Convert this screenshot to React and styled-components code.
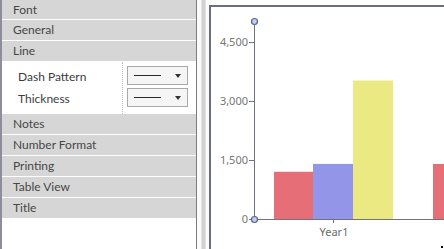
import React from "react";
import styled, { createGlobalStyle } from "styled-components";

const Global = createGlobalStyle`
  html, body { margin: 0; padding: 0; background: #fff; overflow: hidden; }
  #root { width: 444px; height: 249px; }
`;

const Page = styled.div`
  display: flex;
  width: 444px;
  height: 249px;
  overflow: hidden;
  font-family: "Lato", "Noto Sans", sans-serif;
`;

const LeftStrip = styled.div`
  width: 2px;
  flex: none;
  background: #8d8d9b;
`;

const Panel = styled.div`
  width: 194px;
  flex: none;
  display: flex;
  flex-direction: column;
  background: #fff;
  border-right: 1px solid #7c7c86;
`;

const Header = styled.div`
  height: ${(p) => (p.$first ? 19 : 20)}px;
  flex: none;
  display: flex;
  align-items: center;
  padding-left: 11px;
  background: #d6d6d6;
  border-bottom: 1px solid #fff;
  color: #474747;
  font-size: 12px;
  line-height: 1;
`;

const Content = styled.div`
  height: 52px;
  flex: none;
  display: flex;
  background: #fff;
`;

const LabelCol = styled.div`
  width: 104px;
  padding: 5px 0 0 16px;
  display: flex;
  flex-direction: column;
  gap: 3px;
`;

const ControlCol = styled.div`
  border-left: 1px dotted #b8b8b8;
  padding: 4px 0 0 4px;
  display: flex;
  flex-direction: column;
  gap: 3px;
`;

const Label = styled.div`
  height: 19px;
  display: flex;
  align-items: center;
  color: #3c3c3c;
  font-size: 12px;
`;

const Select = styled.div`
  width: 53px;
  height: 17px;
  border: 1px solid #a9a9a9;
  background: #f5f5f5;
  display: flex;
  align-items: center;
  padding-left: 6px;
  box-sizing: content-box;
`;

const LineSample = styled.div`
  width: 27px;
  height: 1px;
  background: #2a2a2a;
`;

const Arrow = styled.div`
  margin-left: 14px;
  width: 0;
  height: 0;
  border-left: 3.5px solid transparent;
  border-right: 3.5px solid transparent;
  border-top: 4px solid #333;
`;

const Gap = styled.div`
  width: ${(p) => p.$w}px;
  flex: none;
  background: #fbfbfb;
`;

const Splitter = styled.div`
  width: 3px;
  flex: none;
  background: #d2d2d2;
  border-left: 1px solid #e4e4e4;
  border-right: 1px solid #e4e4e4;
`;

const ChartArea = styled.div`
  flex: 1;
  padding-top: 5px;
  background: #fff;
`;

const ChartFrame = styled.div`
  width: 100%;
  height: 100%;
  border-left: 2px solid #6a6e80;
  border-top: 2px solid #6a6e80;
  background: #fff;
  box-sizing: border-box;
  overflow: hidden;
`;

const headersTop = ["Font", "General", "Line"];
const headersBottom = ["Notes", "Number Format", "Printing", "Table View", "Title"];

const y0 = 212;
const scale = 177 / 4500;
const yv = (v) => y0 - v * scale;

const bars = [
  { x: 63, w: 39, v: 1200, c: "#e66e77" },
  { x: 102, w: 40, v: 1400, c: "#9396e8" },
  { x: 142, w: 40, v: 3520, c: "#ebe981" },
  { x: 222, w: 40, v: 1400, c: "#e66e77" },
];

const ticks = [0, 1500, 3000, 4500];

function Chart() {
  return (
    <svg width="233" height="242" viewBox="0 0 233 242" style={{ display: "block" }}>
      {bars.map((b, i) => (
        <rect key={i} x={b.x} y={yv(b.v)} width={b.w} height={y0 - yv(b.v)} fill={b.c} />
      ))}
      <line x1="43.5" y1="14" x2="43.5" y2={y0} stroke="#72727c" strokeWidth="1" />
      <line x1="43" y1={y0 + 0.5} x2="233" y2={y0 + 0.5} stroke="#72727c" strokeWidth="1" />
      {ticks.map((t) => (
        <g key={t}>
          <line x1="38" y1={Math.round(yv(t)) + 0.5} x2="43" y2={Math.round(yv(t)) + 0.5} stroke="#72727c" />
          <text
            x="37"
            y={Math.round(yv(t)) + 4}
            textAnchor="end"
            fontSize="11"
            fill="#767676"
            fontFamily='"Noto Sans", sans-serif'
          >
            {t.toLocaleString("en-US")}
          </text>
        </g>
      ))}
      <line x1="122.5" y1={y0} x2="122.5" y2={y0 + 4} stroke="#72727c" />
      <text x="123" y="229" textAnchor="middle" fontSize="11" fill="#6a6a6a" fontFamily='"Noto Sans", sans-serif'>
        Year1
      </text>
      <circle cx="43.5" cy="14.5" r="3" fill="#c4ccf0" stroke="#55658f" strokeWidth="1.2" />
      <circle cx="43.5" cy={y0 + 0.5} r="3" fill="#c4ccf0" stroke="#55658f" strokeWidth="1.2" />
      <rect x="230" y="239" width="2" height="2" fill="#000" />
    </svg>
  );
}

export default function App() {
  return (
    <>
      <Global />
      <Page>
        <LeftStrip />
        <Panel>
          {headersTop.map((h, i) => (
            <Header key={h} $first={i === 0}>{h}</Header>
          ))}
          <Content>
            <LabelCol>
              <Label>Dash Pattern</Label>
              <Label>Thickness</Label>
            </LabelCol>
            <ControlCol>
              <Select>
                <LineSample />
                <Arrow />
              </Select>
              <Select>
                <LineSample />
                <Arrow />
              </Select>
            </ControlCol>
          </Content>
          {headersBottom.map((h) => (
            <Header key={h}>{h}</Header>
          ))}
        </Panel>
        <Gap $w={4} />
        <Splitter />
        <Gap $w={3} />
        <ChartArea>
          <ChartFrame>
            <Chart />
          </ChartFrame>
        </ChartArea>
      </Page>
    </>
  );
}
